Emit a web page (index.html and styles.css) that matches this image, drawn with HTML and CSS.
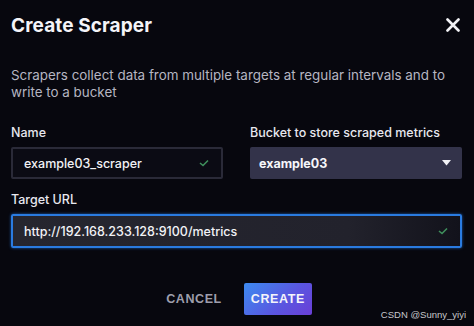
FILE: index.html
```html
<!DOCTYPE html>
<html lang="en">
<head>
  <meta charset="UTF-8">
  <meta name="viewport" content="width=device-width, initial-scale=1.0">
  <title>Create Scraper</title>
  <link rel="stylesheet" href="styles.css">
</head>
<body>
  <div class="overlay">
    <div class="header">
      <h1 class="title">Create Scraper</h1>
      <button class="close" aria-label="Close">
        <svg width="14" height="14" viewBox="0 0 14 14"><path d="M1.5 1.5 L12.5 12.5 M12.5 1.5 L1.5 12.5" stroke="#f2f2f6" stroke-width="2.6" stroke-linecap="round"/></svg>
      </button>
    </div>
    <p class="desc">Scrapers collect data from multiple targets at regular intervals and to write to a bucket</p>
    <div class="form">
      <div class="field">
        <label>Name</label>
        <div class="input">
          <span>example03_scraper</span>
          <svg class="check" width="10" height="8" viewBox="0 0 10 8"><path d="M1 4 L4 6.5 L9 1.5" fill="none" stroke="#3f8f5c" stroke-width="1.6"/></svg>
        </div>
      </div>
      <div class="field">
        <label>Bucket to store scraped metrics</label>
        <div class="select">
          <span>example03</span>
          <svg width="9" height="6" viewBox="0 0 9 6"><path d="M0 0 H9 L4.5 5.5 Z" fill="#f2f2f6"/></svg>
        </div>
      </div>
      <div class="field wide">
        <label>Target URL</label>
        <div class="input focused">
          <span>http://192.168.233.128:9100/metrics</span>
          <svg class="check" width="10" height="8" viewBox="0 0 10 8"><path d="M1 4 L4 6.5 L9 1.5" fill="none" stroke="#3f8f5c" stroke-width="1.6"/></svg>
        </div>
      </div>
    </div>
    <div class="footer">
      <button class="btn cancel">CANCEL</button>
      <button class="btn create">CREATE</button>
    </div>
    <div class="mark">CSDN @Sunny_yiyi</div>
  </div>
</body>
</html>
```

FILE: styles.css
```css
body {
  margin: 0;
  background-color: #07070e;
  font-family: Inter, "Noto Sans", sans-serif;
  color: #e8e8ef;
}
.overlay {
  position: relative;
  width: 474px;
  height: 326px;
  box-sizing: border-box;
  padding: 0 11px;
}
.header {
  display: flex;
  justify-content: space-between;
  align-items: center;
  height: 50px;
}
.title {
  margin: 0;
  font-size: 19px;
  font-weight: 700;
  color: #f4f4f8;
  letter-spacing: 0.1px;
}
.close {
  background: none;
  border: none;
  padding: 0;
  margin-right: 3px;
  display: flex;
}
.desc {
  margin: 17px 0 0;
  font-size: 13.4px;
  line-height: 17px;
  color: #b6b6c2;
  max-width: 440px;
}
.form {
  display: grid;
  grid-template-columns: 212px 212px;
  column-gap: 27px;
  row-gap: 14px;
  margin-top: 25px;
}
.field {
  display: flex;
  flex-direction: column;
  gap: 7px;
}
.field.wide {
  grid-column: 1 / 3;
}
label {
  font-size: 12.5px;
  line-height: 14px;
  font-weight: 500;
  color: #e8e8ef;
}
.input, .select {
  height: 32px;
  box-sizing: border-box;
  display: flex;
  align-items: center;
  justify-content: space-between;
  padding: 0 11px;
  font-size: 12.5px;
  font-weight: 500;
  border-radius: 2px;
}
.input {
  border: 2px solid #2a2a38;
  background-color: #0b0b14;
  color: #f2f2f6;
}
.input.focused {
  height: 34px;
  border-color: #2a7be0;
  background: linear-gradient(90deg, #26262f 0%, #22222c 75%, #12121b 100%);
  box-shadow: 0 0 3px #1d5fb0;
}
.select {
  background-color: #33334a;
  color: #f6f6fa;
  font-weight: 700;
  padding-left: 9px;
  padding-right: 11px;
}
.check {
  margin-right: 1px;
}
.footer {
  display: flex;
  justify-content: center;
  align-items: center;
  gap: 22px;
  margin-top: 35px;
  padding-left: 4px;
}
.btn {
  border: none;
  font-family: "Liberation Sans", Arial, sans-serif;
  font-weight: 700;
  font-size: 12.5px;
  letter-spacing: 0.6px;
  cursor: pointer;
}
.cancel {
  background: none;
  color: #9e9eac;
  padding: 0;
}
.create {
  width: 68px;
  height: 32px;
  border-radius: 2px;
  color: #f4f4fa;
  background: linear-gradient(135deg, #3d8bf0 0%, #5a55e0 60%, #6a3fd6 100%);
}
.mark {
  position: absolute;
  right: 8px;
  bottom: 6px;
  font-family: "Liberation Sans", Arial, sans-serif;
  font-size: 9.5px;
  color: #c8c8cc;
}
```
